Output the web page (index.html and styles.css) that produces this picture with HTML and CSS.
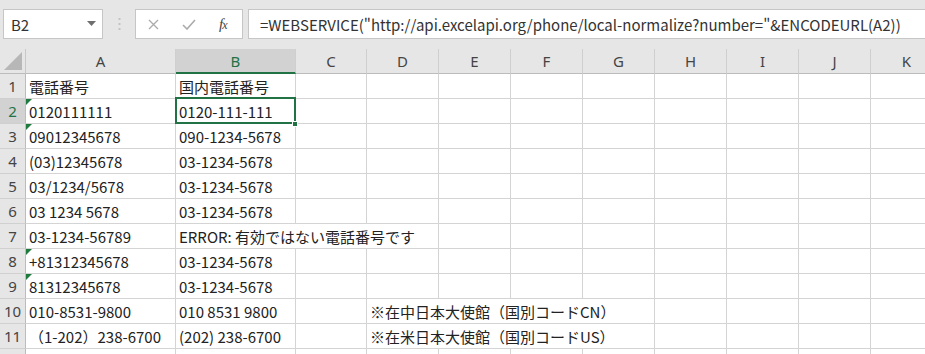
FILE: index.html
```html
<!DOCTYPE html>
<html lang="ja">
<head>
<meta charset="utf-8">
<link rel="stylesheet" href="styles.css">
</head>
<body>
<div class="app">
  <div class="fbar">
    <div class="namebox"><span class="nb-text">B2</span><svg class="nb-arrow" width="9" height="5" viewBox="0 0 9 5"><path d="M0 0H9L4.5 5Z" fill="#6e6e6e"/></svg></div>
    <div class="grip"><svg width="3" height="12" viewBox="0 0 3 12"><rect x="0.5" y="0" width="2" height="2" fill="#c3c3c3"/><rect x="0.5" y="5" width="2" height="2" fill="#c3c3c3"/><rect x="0.5" y="10" width="2" height="2" fill="#c3c3c3"/></svg></div>
    <div class="fbtns">
      <svg class="ico-x" width="11" height="11" viewBox="0 0 11 11"><path d="M1 1L10 10M10 1L1 10" stroke="#ababab" stroke-width="1.3" fill="none"/></svg>
      <svg class="ico-ok" width="14" height="11" viewBox="0 0 14 11"><path d="M1 6L5 10L13 1" stroke="#ababab" stroke-width="1.6" fill="none"/></svg>
      <span class="fx"><i>f</i><i class="fx-x">x</i></span>
    </div>
    <div class="finput">=WEBSERVICE("http://api.excelapi.org/phone/local-normalize?number="&amp;ENCODEURL(A2))</div>
  </div>
  <div class="sheet">
    <div class="corner"><svg width="18" height="18" viewBox="0 0 18 18"><path d="M18 0V18H0Z" fill="#b7b7b7"/></svg></div>
    <div class="ch">A</div><div class="ch sel">B</div><div class="ch">C</div><div class="ch">D</div><div class="ch">E</div><div class="ch">F</div><div class="ch">G</div><div class="ch">H</div><div class="ch">I</div><div class="ch">J</div><div class="ch">K</div>

    <div class="rh">1</div><div class="c">電話番号</div><div class="c">国内電話番号</div><div class="c"></div><div class="c"></div><div class="c"></div><div class="c"></div><div class="c"></div><div class="c"></div><div class="c"></div><div class="c"></div><div class="c"></div>

    <div class="rh sel">2</div><div class="c tri">0120111111</div><div class="c active">0120-111-111<span class="handle"></span></div><div class="c"></div><div class="c"></div><div class="c"></div><div class="c"></div><div class="c"></div><div class="c"></div><div class="c"></div><div class="c"></div><div class="c"></div>

    <div class="rh">3</div><div class="c tri">09012345678</div><div class="c">090-1234-5678</div><div class="c"></div><div class="c"></div><div class="c"></div><div class="c"></div><div class="c"></div><div class="c"></div><div class="c"></div><div class="c"></div><div class="c"></div>

    <div class="rh">4</div><div class="c">(03)12345678</div><div class="c">03-1234-5678</div><div class="c"></div><div class="c"></div><div class="c"></div><div class="c"></div><div class="c"></div><div class="c"></div><div class="c"></div><div class="c"></div><div class="c"></div>

    <div class="rh">5</div><div class="c">03/1234/5678</div><div class="c">03-1234-5678</div><div class="c"></div><div class="c"></div><div class="c"></div><div class="c"></div><div class="c"></div><div class="c"></div><div class="c"></div><div class="c"></div><div class="c"></div>

    <div class="rh">6</div><div class="c">03 1234 5678</div><div class="c">03-1234-5678</div><div class="c"></div><div class="c"></div><div class="c"></div><div class="c"></div><div class="c"></div><div class="c"></div><div class="c"></div><div class="c"></div><div class="c"></div>

    <div class="rh">7</div><div class="c">03-1234-56789</div><div class="c span3">ERROR: 有効ではない電話番号です</div><div class="c"></div><div class="c"></div><div class="c"></div><div class="c"></div><div class="c"></div><div class="c"></div><div class="c"></div>

    <div class="rh">8</div><div class="c tri">+81312345678</div><div class="c">03-1234-5678</div><div class="c"></div><div class="c"></div><div class="c"></div><div class="c"></div><div class="c"></div><div class="c"></div><div class="c"></div><div class="c"></div><div class="c"></div>

    <div class="rh">9</div><div class="c tri">81312345678</div><div class="c">03-1234-5678</div><div class="c"></div><div class="c"></div><div class="c"></div><div class="c"></div><div class="c"></div><div class="c"></div><div class="c"></div><div class="c"></div><div class="c"></div>

    <div class="rh">10</div><div class="c">010-8531-9800</div><div class="c">010 8531 9800</div><div class="c"></div><div class="c span4">※在中日本大使館（国別コードCN）</div><div class="c"></div><div class="c"></div><div class="c"></div><div class="c"></div>

    <div class="rh">11</div><div class="c">（1-202）238-6700</div><div class="c">(202) 238-6700</div><div class="c"></div><div class="c span4">※在米日本大使館（国別コードUS）</div><div class="c"></div><div class="c"></div><div class="c"></div><div class="c"></div>

    <div class="rh"></div><div class="c"></div><div class="c"></div><div class="c"></div><div class="c"></div><div class="c"></div><div class="c"></div><div class="c"></div><div class="c"></div><div class="c"></div><div class="c"></div><div class="c"></div>
  </div>
</div>
</body>
</html>
```

FILE: styles.css
```css
* { box-sizing: border-box; }
html, body { margin: 0; padding: 0; background: #fff; }
body { font-family: "Noto Sans CJK JP", "Noto Sans", sans-serif; }

.app {
  width: 925px;
  height: 354px;
  overflow: hidden;
  background: #fff;
}

/* formula bar */
.fbar {
  height: 49px;
  background: #e6e6e6;
  display: flex;
  align-items: flex-start;
  padding-top: 9px;
  padding-left: 3px;
}
.namebox {
  width: 100px;
  height: 30px;
  background: #fff;
  border: 1px solid #c6c6c6;
  display: flex;
  align-items: center;
  justify-content: space-between;
  padding: 0 6px 0 7px;
}
.nb-text { font-size: 15px; color: #333; }
.nb-arrow { margin-top: -2px; }
.grip {
  width: 32px;
  height: 30px;
  display: flex;
  align-items: center;
  justify-content: center;
  padding-left: 1px;
}
.fbtns {
  width: 108px;
  height: 30px;
  background: #fff;
  border: 1px solid #c6c6c6;
  display: flex;
  align-items: center;
  padding-left: 12px;
}
.ico-x { margin-right: 23px; }
.ico-ok { margin-right: 23px; }
.fx {
  font-family: "Liberation Serif", serif;
  font-size: 15px;
  color: #444;
  letter-spacing: -1px;
}
.fx-x { font-size: 12px; }
.finput {
  flex: 1;
  margin-left: 5px;
  margin-right: -3px;
  height: 30px;
  background: #fff;
  border: 1px solid #c6c6c6;
  display: flex;
  align-items: center;
  padding-left: 11px;
  font-size: 15px;
  color: #333;
  white-space: nowrap;
  overflow: hidden;
}

/* sheet */
.sheet {
  display: grid;
  grid-template-columns: 26px 150px 120px 71px 72px 72px 72px 72px 72px 72px 72px 72px;
  grid-template-rows: 25px;
  grid-auto-rows: 25px;
  width: 942px;
  font-size: 15px;
}
.corner {
  background: #e6e6e6;
  border-right: 1px solid #c8c8c8;
  border-bottom: 1px solid #bcbcbc;
  display: flex;
  align-items: flex-end;
  justify-content: flex-end;
  padding: 0 3px 3px 0;
}
.ch {
  background: #e6e6e6;
  border-right: 1px solid #cfcfcf;
  border-bottom: 1px solid #bcbcbc;
  display: flex;
  align-items: center;
  justify-content: center;
  color: #444;
  font-family: "Noto Sans", sans-serif;
  font-size: 15px;
}
.ch.sel {
  background: #d2d2d2;
  color: #217346;
  border-bottom: 2px solid #217346;
}
.rh {
  background: #e6e6e6;
  border-right: 1px solid #bcbcbc;
  border-bottom: 1px solid #d0d0d0;
  display: flex;
  align-items: center;
  justify-content: center;
  color: #444;
  font-family: "Noto Sans", sans-serif;
  font-size: 15px;
}
.rh.sel {
  background: #d2d2d2;
  color: #217346;
}
.c {
  border-right: 1px solid #d4d4d4;
  border-bottom: 1px solid #d4d4d4;
  display: flex;
  align-items: center;
  padding-left: 3px;
  color: #222;
  white-space: nowrap;
  position: relative;
}
.span3 { grid-column: span 3; }
.span4 { grid-column: span 4; }
.tri::before {
  content: "";
  position: absolute;
  left: 0;
  top: 0;
  border-top: 6px solid #1f7a3e;
  border-right: 6px solid transparent;
}
.active::after {
  content: "";
  position: absolute;
  left: -1px;
  top: -2px;
  right: -1px;
  bottom: -1px;
  border: 2px solid #217346;
  pointer-events: none;
}
.handle {
  position: absolute;
  left: 116px;
  top: 22px;
  width: 6px;
  height: 6px;
  background: #217346;
  border: 1px solid #fff;
  z-index: 2;
}
```
